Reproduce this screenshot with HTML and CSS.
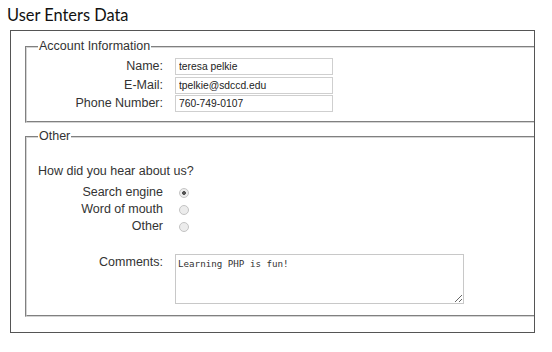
FILE: index.html
```html
<!DOCTYPE html>
<html lang="en">
<head>
  <meta charset="UTF-8" />
  <meta name="viewport" content="width=device-width, initial-scale=1.0" />
  <title>User Enters Data</title>
  <link rel="stylesheet" href="styles.css">
</head>
<body>
  <h1 class="slide-title">User Enters Data</h1>

  <div class="page-frame">
    <form class="signup">
      <fieldset class="group">
        <legend>Account Information</legend>
        <div class="field-grid">
          <label for="name">Name:</label>
          <input type="text" id="name" value="teresa pelkie" />
          <label for="email">E-Mail:</label>
          <input type="text" id="email" value="tpelkie@sdccd.edu" />
          <label for="phone">Phone Number:</label>
          <input type="text" id="phone" value="760-749-0107" />
        </div>
      </fieldset>

      <fieldset class="group group-other">
        <legend>Other</legend>
        <p class="question">How did you hear about us?</p>
        <div class="radio-grid">
          <label for="src1">Search engine</label>
          <input type="radio" name="heard" id="src1" checked />
          <label for="src2">Word of mouth</label>
          <input type="radio" name="heard" id="src2" />
          <label for="src3">Other</label>
          <input type="radio" name="heard" id="src3" />
        </div>
        <div class="field-grid comments-row">
          <label for="comments">Comments:</label>
          <textarea id="comments">Learning PHP is fun!</textarea>
        </div>
      </fieldset>
    </form>
  </div>
</body>
</html>
```

FILE: styles.css
```css
body {
  margin: 0;
  padding: 4px 0 0 7px;
  background: #fff;
  font-family: "Liberation Sans", Arial, sans-serif;
  color: #333;
}
.slide-title {
  margin: 0;
  font-family: Lato, "Open Sans", sans-serif;
  font-weight: normal;
  font-size: 16.4px;
  line-height: 22px;
  color: #111;
}
.page-frame {
  margin: 4px 0 0 3px;
  width: 523px;
  height: 293px;
  border: 1px solid #555;
  overflow: hidden;
  padding-top: 8px;
}
.group {
  margin: 0 -20px 0 14px;
  padding: 4px 0 9px 0;
  border: 2px groove #d4d4d4;
}
.group legend {
  margin-left: 11px;
  padding: 0 1px;
  font-size: 12.5px;
  line-height: 15px;
  color: #333;
}
.group-other {
  margin-top: 6px;
  padding-top: 20px;
  padding-bottom: 11px;
}
.field-grid {
  display: grid;
  grid-template-columns: 136px 158px;
  column-gap: 12px;
  row-gap: 1.5px;
  align-items: center;
}
.field-grid label,
.radio-grid label {
  text-align: right;
  font-size: 12.5px;
  line-height: 15px;
}
.field-grid input {
  height: 17px;
  box-sizing: border-box;
  margin: 0;
  padding: 0 3px;
  border: 1px solid #cfcfcf;
  font-family: "Liberation Sans", Arial, sans-serif;
  font-size: 10.3px;
  color: #222;
}
.question {
  margin: 0 0 6px 11px;
  font-size: 12.5px;
  line-height: 15px;
}
.radio-grid {
  display: grid;
  grid-template-columns: 136px 10px;
  column-gap: 16px;
  row-gap: 2px;
  align-items: center;
}
.radio-grid input {
  appearance: none;
  width: 10px;
  height: 10px;
  margin: 0;
  border: 1px solid #c4c4c4;
  border-radius: 50%;
  background: #ececec;
  box-sizing: border-box;
}
.radio-grid input:checked {
  background: radial-gradient(circle, #555 0 1.6px, #ececec 2.2px);
}
.comments-row {
  grid-template-columns: 136px 289px;
  margin-top: 20px;
  align-items: start;
}
.comments-row label {
  padding-top: 1px;
}
.comments-row textarea {
  height: 50px;
  box-sizing: border-box;
  margin: 0;
  padding: 3px 2px;
  border: 1px solid #c8c8c8;
  font-family: "DejaVu Sans Mono", "Liberation Mono", monospace;
  font-size: 9.2px;
  color: #333;
}
```
